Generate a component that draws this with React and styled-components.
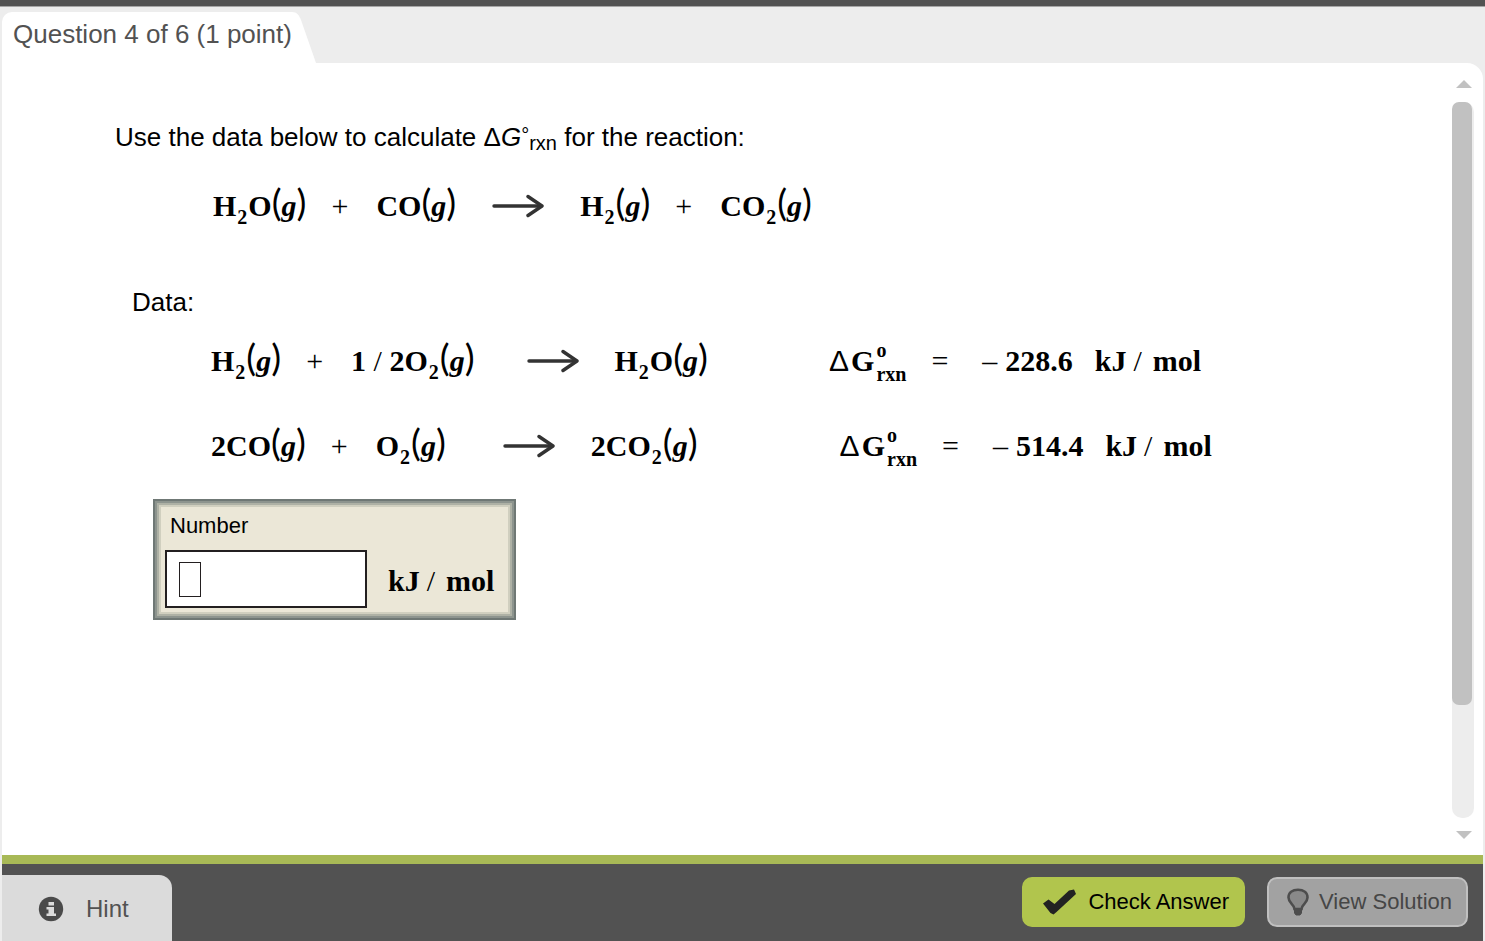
import React, { useState } from 'react';
import styled, { createGlobalStyle } from 'styled-components';

const GlobalStyle = createGlobalStyle`
  * {
    box-sizing: border-box;
  }
  body {
    margin: 0;
    background: #ededed;
    font-family: "Liberation Sans", Arial, sans-serif;
  }
`;

const Page = styled.div`
  display: flex;
  flex-direction: column;
  min-height: 100vh;
  padding: 0 2px;
  border-top: 6px solid #525252;
  box-shadow: inset 0 1px #a6a6a6;
`;

const Header = styled.header`
  display: flex;
  padding-top: 6px;
`;

const TabTitle = styled.h1`
  margin: 0;
  padding: 4px 0 11px 11px;
  border-radius: 10px 0 0 0;
  background: #fff;
  color: #525252;
  font-size: 26px;
  font-weight: normal;
  line-height: 36px;
`;

const Panel = styled.main`
  display: flex;
  flex: 1;
  border-radius: 0 16px 0 0;
  background: #fff;
`;

const Content = styled.div`
  flex: 1;
  padding: 58px 0 32px 113px;
  color: #000;
`;

const Prompt = styled.p`
  margin: 0 0 33px;
  font-size: 26px;
  line-height: 32px;

  sub {
    font-size: 20px;
    line-height: 0;
    vertical-align: -4px;
  }
`;

const Degree = styled.span`
  font-size: 20px;
  line-height: 0;
  vertical-align: 4px;
`;

const DataLabel = styled.h2`
  margin: 60px 0 23px 17px;
  font-size: 26px;
  font-weight: normal;
  line-height: 32px;
`;

const Equation = styled.div`
  display: flex;
  align-items: baseline;
  height: 40px;
  margin-left: ${({ $indent }) => $indent}px;
  font-family: "Liberation Serif", "Times New Roman", serif;
  font-size: 30px;
  font-weight: bold;
  line-height: 40px;
  white-space: nowrap;
`;

const DataList = styled.div`
  display: flex;
  flex-direction: column;
  gap: 45px;
`;

const Term = styled.span`
  display: inline-flex;
  align-items: baseline;
`;

const Subscript = styled.span`
  position: relative;
  top: 8px;
  margin: 0 1px;
  font-size: 20px;
  line-height: 0;
`;

const Paren = styled.span`
  font-family: Lato, sans-serif;
  font-size: 37px;
  font-weight: 400;
  line-height: 0;
`;

const Operator = styled.span`
  margin: 0 28px 0 25px;
  font-weight: normal;
`;

const Arrow = styled.svg`
  align-self: center;
  flex: none;
  width: 52px;
  height: 24px;
  margin: 0 36px 0 ${({ $before }) => $before}px;
`;

const Delta = styled.span`
  margin-right: 2px;
  font-family: "Liberation Sans", Arial, sans-serif;
  font-weight: normal;
`;

const Energy = styled.span`
  display: inline-flex;
  align-items: baseline;
  margin-left: ${({ $before }) => $before}px;
`;

const Scripts = styled.span`
  display: inline-flex;
  flex-direction: column;
  margin: -12px 0 -12px 2px;
  vertical-align: 14px;
  font-size: 20px;
  line-height: 24px;
`;

const Value = styled.span`
  display: inline-flex;
  gap: 8px;
  margin: 0 22px 0 6px;
`;

const UnitText = styled.span`
  display: inline-flex;
  gap: 7px;
  font-family: "Liberation Serif", "Times New Roman", serif;
  font-size: 30px;
  font-weight: bold;
`;

const Thin = styled.span`
  font-weight: normal;
`;

const Slash = styled(Thin)`
  padding-right: 4px;
`;

const AnswerBox = styled.div`
  display: inline-flex;
  flex-direction: column;
  margin: 33px 0 0 38px;
  padding: 13px 22px 12px 12px;
  background: #ebe7d7;
  box-shadow:
    inset 0 0 0 2px #6f7875,
    inset 0 0 0 4px #8d948e,
    inset 0 0 0 6px #aeb1a5,
    inset 0 0 0 8px #d0cfbf;
`;

const AnswerLabel = styled.label`
  padding-left: 5px;
  font-size: 22px;
  line-height: 28px;
`;

const AnswerRow = styled.div`
  display: flex;
  align-items: center;
  gap: 21px;
  margin-top: 10px;

  ${UnitText} {
    padding-top: 3px;
  }
`;

const Field = styled.div`
  display: flex;
  align-items: center;
  width: 202px;
  height: 58px;
  padding-left: 12px;
  border: 2px solid #231f20;
  background: #fff;
`;

const Slot = styled.span`
  flex: none;
  width: 22px;
  height: 35px;
  border: 1px solid #231f20;
`;

const NumberInput = styled.input`
  flex: 1;
  min-width: 0;
  height: 100%;
  padding: 0 8px;
  border: 0;
  outline: none;
  background: transparent;
  font: 26px "Liberation Sans", Arial, sans-serif;
`;

const ScrollBar = styled.div`
  display: flex;
  flex-direction: column;
  align-items: center;
  width: 22px;
  margin: 17px 9px 16px 0;
`;

const ScrollButton = styled.button`
  width: 16px;
  height: 8px;
  margin-left: 2px;
  padding: 0;
  border: 0;
  background: #c1c1c1;
  clip-path: ${({ $down }) =>
    $down ? 'polygon(0 0, 100% 0, 50% 100%)' : 'polygon(50% 0, 100% 100%, 0 100%)'};
`;

const Track = styled.div`
  flex: 1;
  width: 100%;
  margin: 14px 0 13px;
  border-radius: 10px;
  background: #ededed;
`;

const Thumb = styled.div`
  width: 20px;
  border-radius: 7px;
  background: #c1c1c1;
`;

const Footer = styled.footer`
  display: flex;
  justify-content: space-between;
  height: 86px;
  border-top: 9px solid #a8b956;
  background: #525252;
`;

const HintButton = styled.button`
  display: flex;
  align-items: center;
  gap: 22px;
  width: 170px;
  margin-top: 11px;
  padding: 2px 0 0 36px;
  border: 0;
  border-radius: 0 13px 0 0;
  background: #dbdbdb;
  color: #525252;
  font: 24px "Liberation Sans", Arial, sans-serif;
`;

const Actions = styled.div`
  display: flex;
  align-items: flex-start;
  gap: 22px;
  padding: 13px 15px 0 0;
`;

const ActionButton = styled.button`
  display: flex;
  align-items: center;
  justify-content: flex-end;
  gap: ${({ $muted }) => ($muted ? 9 : 12)}px;
  width: ${({ $muted }) => ($muted ? 201 : 223)}px;
  height: 50px;
  padding: 0 14px 0 0;
  border: 2px solid ${({ $muted }) => ($muted ? '#c0c0c0' : '#b1c54d')};
  border-radius: 10px;
  background: ${({ $muted }) => ($muted ? '#a2a2a2' : '#b1c54d')};
  color: ${({ $muted }) => ($muted ? '#464646' : '#000')};
  font: 22px "Liberation Sans", Arial, sans-serif;
  white-space: nowrap;
`;

const Gas = () => (
  <>
    <Paren>(</Paren>
    <i>g</i>
    <Paren>)</Paren>
  </>
);

const Yields = ({ before }) => (
  <Arrow $before={before} viewBox="0 0 52 24" fill="none" stroke="#333" strokeLinecap="round">
    <path d="M2 12H49" strokeWidth="3.4" />
    <path d="M36 2.5L50 12L36 21.5" strokeWidth="3.4" strokeLinejoin="round" />
  </Arrow>
);

const Unit = () => (
  <UnitText>
    <span>kJ</span>
    <Slash>/</Slash>
    <span>mol</span>
  </UnitText>
);

const FreeEnergy = ({ value, before }) => (
  <Energy $before={before}>
    <Delta>Δ</Delta>
    <span>
      G
      <Scripts>
        <span>o</span>
        <span>rxn</span>
      </Scripts>
    </span>
    <Operator>=</Operator>
    <Value>
      <Thin>–</Thin>
      <span>{value}</span>
    </Value>
    <Unit />
  </Energy>
);

const App = () => {
  const [answer, setAnswer] = useState('');

  return (
    <>
      <GlobalStyle />
      <Page>
        <Header>
          <TabTitle>Question 4 of 6 (1 point)</TabTitle>
          <svg width="24" height="51" viewBox="0 0 24 51" fill="#fff">
            <path d="M0 0C5 0 7 3 9 8L24 51H0Z" />
          </svg>
        </Header>
        <Panel>
          <Content>
            <Prompt>
              Use the data below to calculate Δ<i>G</i><Degree>°</Degree><sub>rxn</sub> for the reaction:
            </Prompt>
            <Equation $indent={98}>
              <Term>H<Subscript>2</Subscript>O<Gas /></Term>
              <Operator>+</Operator>
              <Term>CO<Gas /></Term>
              <Yields before={36} />
              <Term>H<Subscript>2</Subscript><Gas /></Term>
              <Operator>+</Operator>
              <Term>CO<Subscript>2</Subscript><Gas /></Term>
            </Equation>

            <DataLabel>Data:</DataLabel>
            <DataList>
              <Equation $indent={96}>
                <Term>H<Subscript>2</Subscript><Gas /></Term>
                <Operator>+</Operator>
                <Term>1<Thin>&nbsp;/&nbsp;</Thin>2O<Subscript>2</Subscript><Gas /></Term>
                <Yields before={52} />
                <Term>H<Subscript>2</Subscript>O<Gas /></Term>
                <FreeEnergy before={121} value="228.6" />
              </Equation>
              <Equation $indent={96}>
                <Term>2CO<Gas /></Term>
                <Operator>+</Operator>
                <Term>O<Subscript>2</Subscript><Gas /></Term>
                <Yields before={57} />
                <Term>2CO<Subscript>2</Subscript><Gas /></Term>
                <FreeEnergy before={142} value="514.4" />
              </Equation>
            </DataList>

            <AnswerBox>
              <AnswerLabel htmlFor="answer">Number</AnswerLabel>
              <AnswerRow>
                <Field>
                  <Slot />
                  <NumberInput
                    id="answer"
                    type="text"
                    value={answer}
                    onChange={(event) => setAnswer(event.target.value)}
                  />
                </Field>
                <Unit />
              </AnswerRow>
            </AnswerBox>
          </Content>

          <ScrollBar>
            <ScrollButton aria-label="Scroll up" />
            <Track>
              <Thumb style={{ height: `${(603 / 716) * 100}%` }} />
            </Track>
            <ScrollButton $down aria-label="Scroll down" />
          </ScrollBar>
        </Panel>

        <Footer>
          <HintButton>
            <svg width="26" height="26" viewBox="0 0 26 26">
              <circle cx="13" cy="13" r="12.2" fill="#4a4a4a" />
              <path d="M10.5 6H16V9.5H10.5ZM8.5 11H16V17.5H18V20H8.5V17.5H10.5V13.5H8.5Z" fill="#dbdbdb" />
            </svg>
            Hint
          </HintButton>
          <Actions>
            <ActionButton>
              <svg width="34" height="28" viewBox="0 0 34 28" fill="#222">
                <path d="M1 15.5L6.5 11.5L12.5 16L27 2.5L32 1.5L34 6L14.5 24L11.5 26.5L8.5 25Z" />
              </svg>
              Check Answer
            </ActionButton>
            <ActionButton $muted>
              <svg width="24" height="28" viewBox="0 0 24 28" fill="none" stroke="#4d4d4d">
                <path d="M8.5 21C8.5 16.5 2.5 15.5 2.5 9.5C2.5 4.5 6.5 1.7 12 1.7S21.5 4.5 21.5 9.5C21.5 15.5 15.5 16.5 15.5 21Z" fill="#898989" strokeWidth="2.6" />
                <path d="M8.5 21.5H15.5V25L14 27H10L8.5 25Z" fill="#4d4d4d" />
              </svg>
              View Solution
            </ActionButton>
          </Actions>
        </Footer>
      </Page>
    </>
  );
};

export default App;
